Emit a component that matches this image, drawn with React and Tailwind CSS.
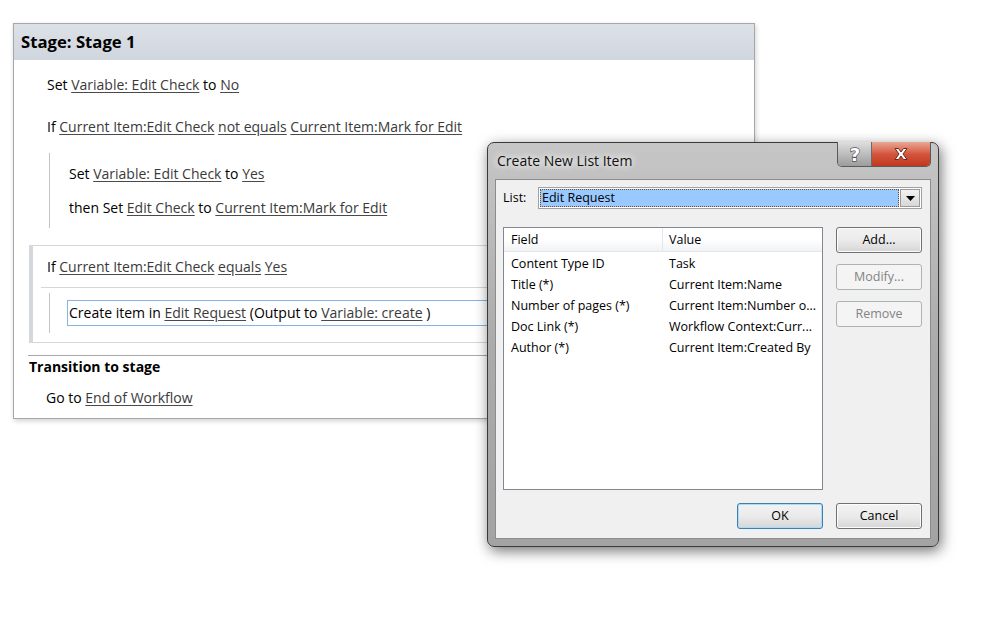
import { useState } from 'react';

const font = { fontFamily: '"Open Sans", "Noto Sans", sans-serif' };

function L({ children }) {
  return <span className="underline underline-offset-2 decoration-[#4a4a4a] text-[#3a3a3a]">{children}</span>;
}

const fields = [
  ['Content Type ID', 'Task'],
  ['Title (*)', 'Current Item:Name'],
  ['Number of pages (*)', 'Current Item:Number o...'],
  ['Doc Link (*)', 'Workflow Context:Curr...'],
  ['Author (*)', 'Current Item:Created By'],
];

function Btn({ children, disabled, focused, className = '' }) {
  return (
    <button
      className={`h-[26px] w-[86px] rounded-[3px] border text-[12.5px] ${
        disabled
          ? 'border-[#adb2b5] bg-[#f4f4f4] text-[#838383]'
          : focused
          ? 'border-[#3c7fb1] bg-gradient-to-b from-[#f2f2f2] via-[#ebebeb] to-[#d6d6d6] text-black shadow-[inset_0_0_0_1px_#a8dcf7]'
          : 'border-[#707070] bg-gradient-to-b from-[#f2f2f2] via-[#ebebeb] to-[#d6d6d6] text-black shadow-[inset_0_0_0_1px_#fcfcfc]'
      } ${className}`}
    >
      {children}
    </button>
  );
}

function Dialog() {
  return (
    <div className="absolute left-[487px] top-[142px] w-[452px] h-[405px] rounded-[7px] border border-[#3a3a3a] bg-gradient-to-b from-[#c6c6c6] via-[#ababab] to-[#a3a3a3] shadow-[2px_4px_14px_rgba(0,0,0,0.55)] flex flex-col">
      {/* title bar */}
      <div className="relative h-[36px] shrink-0">
        <div className="absolute left-[9px] top-[7px] text-[14px] text-[#111] [text-shadow:0_0_10px_#fff,0_0_6px_#fff]">
          Create New List Item
        </div>
        <div className="absolute right-[7px] top-[-1px] flex h-[25px] rounded-b-[5px] border border-t-0 border-[#5a5a5a] overflow-hidden">
          <div className="w-[34px] flex items-center justify-center bg-gradient-to-b from-[#dedede] via-[#bdbdbd] to-[#9c9c9c] border-r border-[#6a6a6a]">
            <svg width="16" height="20" viewBox="0 0 16 20">
              <text x="8" y="17" textAnchor="middle" fontSize="18" fontWeight="bold" fontFamily="DejaVu Sans, sans-serif" fill="#fff" stroke="#4f5262" strokeWidth="1.3" paintOrder="stroke">?</text>
            </svg>
          </div>
          <div className="w-[58px] flex items-center justify-center bg-gradient-to-b from-[#e9a795] via-[#d3553c] to-[#c1361e]">
            <svg width="18" height="14" viewBox="0 0 18 14">
              <path d="M3 1.5h3.5L9 5l2.5-3.5H15L11 7l4 5.5h-3.5L9 9l-2.5 3.5H3L7 7z" fill="#fff" stroke="#6b2a1c" strokeWidth="1" strokeLinejoin="round" />
            </svg>
          </div>
        </div>
      </div>

      {/* client */}
      <div className="mx-[7px] mb-[7px] flex-1 border border-[#8c8c8c] bg-[#f0f0f0] pl-[7px] pr-[8px] pt-[7px] pb-[9px] flex flex-col text-[12.5px] text-black">
        <div className="flex items-center h-[22px]">
          <span className="w-[35px]">List:</span>
          <div className="flex-1 h-[22px] border border-[#a0a0a0] bg-white flex items-center p-[1px]">
            <div className="flex-1 h-full bg-[#99c9ff] border border-dotted border-[#7a4a2a] px-[1px] flex items-center">Edit Request</div>
            <div className="w-[20px] h-full ml-[1px] border border-[#9a9a9a] bg-gradient-to-b from-[#f2f2f2] to-[#d8d8d8] flex items-center justify-center">
              <svg width="9" height="5" viewBox="0 0 9 5"><path d="M0 0h9L4.5 5z" fill="#000" /></svg>
            </div>
          </div>
        </div>

        <div className="flex mt-[18px] gap-[13px]">
          <div className="w-[321px] h-[263px] border border-[#828790] bg-white">
            <div className="flex h-[24px] bg-gradient-to-b from-white via-white to-[#f1f2f4] border-b border-[#e4e6ea]">
              <div className="w-[159px] pl-[7px] pt-[2px] flex items-center border-r border-[#e4e6ea]">Field</div>
              <div className="flex-1 pl-[6px] pt-[2px] flex items-center">Value</div>
            </div>
            <div className="pt-[2px]">
              {fields.map(([f, v]) => (
                <div key={f} className="flex h-[21px] items-center">
                  <div className="w-[159px] pl-[7px] whitespace-nowrap">{f}</div>
                  <div className="flex-1 pl-[6px] whitespace-nowrap overflow-hidden">{v}</div>
                </div>
              ))}
            </div>
          </div>
          <div className="flex flex-col gap-[11px]">
            <Btn>Add...</Btn>
            <Btn disabled>Modify...</Btn>
            <Btn disabled>Remove</Btn>
          </div>
        </div>

        <div className="mt-auto flex justify-end gap-[13px]">
          <Btn focused>OK</Btn>
          <Btn>Cancel</Btn>
        </div>
      </div>
    </div>
  );
}

export default function App() {
  const [sel] = useState(true);
  return (
    <div className="relative w-[985px] h-[625px] bg-white overflow-hidden text-black" style={font}>
      <div className="ml-[13px] pt-[23px]">
        <div className="w-[742px] border border-[#a7a7a7] bg-white shadow-[1px_2px_5px_rgba(0,0,0,0.18)]">
          <div className="h-[36px] bg-gradient-to-b from-[#dde1e8] to-[#d0d6de] pl-[7px] flex items-center text-[16.7px] font-bold">
            Stage: Stage 1
          </div>
          <div className="text-[14px] leading-[20px] pb-[10px]">
            <div className="pl-[33px] pt-[15px]">Set <L>Variable: Edit Check</L> to <L>No</L></div>
            <div className="pl-[33px] mt-[22px]">If <L>Current Item:Edit Check</L> <L>not equals</L> <L>Current Item:Mark for Edit</L></div>

            <div className="ml-[35px] mt-[16px] border-l border-[#c4c4c4] pl-[19px] pt-[11px] pb-[10px]">
              <div>Set <L>Variable: Edit Check</L> to <L>Yes</L></div>
              <div className="mt-[14px]">then Set <L>Edit Check</L> to <L>Current Item:Mark for Edit</L></div>
            </div>

            <div className="ml-[15px] mt-[17px] border-t border-b border-[#d6d6d6] border-l-4 border-l-[#d4d8dc] pb-[9px]">
              <div className="pl-[14px] pt-[11px]">If <L>Current Item:Edit Check</L> <L>equals</L> <L>Yes</L></div>
              <div className="ml-[8px] mt-[10px] border-t border-[#d6d6d6] pt-[5px]">
                <div className="ml-[8px] border-l border-[#c4c4c4] pl-[17px] py-[7px]">
                  <div className={`h-[26px] border ${sel ? 'border-[#84b4e2]' : 'border-transparent'} pl-[1px] flex items-center whitespace-pre`}>
                    Create item in <L>Edit Request</L> (Output to <L>Variable: create</L> )
                  </div>
                </div>
              </div>
            </div>

            <div className="ml-[14px] mt-[12px] border-t border-[#a8a8a8] pt-[1px]">
              <div className="pl-[1px] font-bold">Transition to stage</div>
            </div>
            <div className="pl-[32px] mt-[11px]">Go to <L>End of Workflow</L></div>
          </div>
        </div>
      </div>
      <Dialog />
    </div>
  );
}
